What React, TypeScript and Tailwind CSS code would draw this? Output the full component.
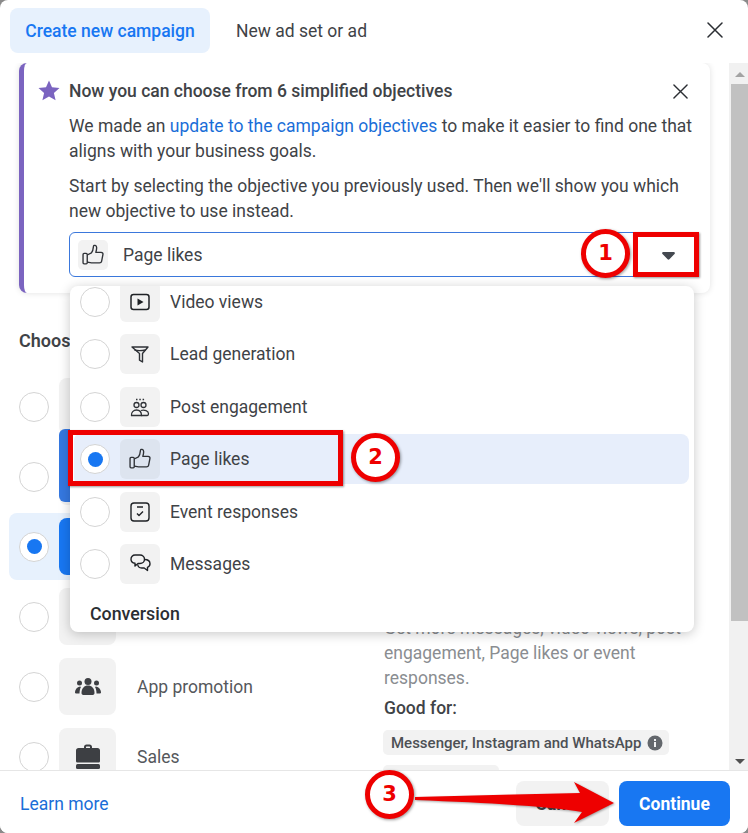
import { ReactNode } from 'react'

function Radio({ on = false }: { on?: boolean }) {
  return (
    <div className="flex h-[30px] w-[30px] shrink-0 items-center justify-center rounded-full border border-[#d4d4d4] bg-white">
      {on && <div className="h-[15px] w-[15px] rounded-full bg-[#1877f2]" />}
    </div>
  )
}

function ThumbIcon() {
  return (
    <svg width="22" height="22" viewBox="0 0 21 21" fill="none" stroke="#2f3237" strokeWidth="1.300" strokeLinejoin="round">
      <rect x="1" y="9" width="4" height="10" rx="1" />
      <path d="M5 10.500 9 8.500c1.200-1.500 1.700-3.500 2-6.500.2-1.200 3-.9 3 1.500 0 1.500-.4 3-.8 4.500h5c1.300 0 2 .9 1.800 2l-1.300 6.500c-.2 1-1 1.500-2 1.500H9c-1.500 0-2.500-.5-4-.8" />
    </svg>
  )
}

function PlayIcon() {
  return (
    <svg width="20" height="18" viewBox="0 0 20 18" fill="none">
      <rect x="1" y="1.500" width="18" height="15" rx="2.500" stroke="#1f2226" strokeWidth="1.500" />
      <path d="M7.500 5.500 13.500 9 7.500 12.500Z" fill="#1f2226" />
    </svg>
  )
}

function FunnelIcon() {
  return (
    <svg width="20" height="20" viewBox="0 0 20 20" fill="none" stroke="#2f3237" strokeWidth="1.400" strokeLinejoin="round">
      <path d="M2 3h16l-5.500 6.500V18l-3-1.800V9.500Z" />
      <path d="M4.500 6c3 .8 7 .8 11 0" />
    </svg>
  )
}

function PeopleIcon() {
  return (
    <svg width="20" height="20" viewBox="0 0 20 20" fill="none" stroke="#2f3237" strokeWidth="1.300">
      <circle cx="6.500" cy="8" r="2.500" />
      <circle cx="13.500" cy="8" r="2.500" />
      <path d="M1.500 18.500c-.5-3 2-5.500 5-5.500s5 2 5 5.500Z" />
      <path d="M11 13.500c3.500-1 7.500.4 7.500 3.200 0 1-.4 1.800-1.200 1.800h-6" />
      <path d="M6 2.500h1.500M9.300 2.500h1.500M12.600 2.500h1.500" strokeWidth="1.500" />
    </svg>
  )
}

function EventIcon() {
  return (
    <svg width="20" height="20" viewBox="0 0 20 20" fill="none" stroke="#1f2226" strokeWidth="1.400" strokeLinejoin="round">
      <rect x="1" y="1" width="18" height="18" rx="3" />
      <path d="M7 5h6" />
      <path d="m7 11.500 2 2 4-4" />
    </svg>
  )
}

function ChatIcon() {
  return (
    <svg width="21" height="20" viewBox="0 0 21 20" fill="none" stroke="#1f2226" strokeWidth="1.400" strokeLinejoin="round">
      <path d="M5 1h5c2.500 0 4.500 1.700 4.500 4.200S12.500 9.500 10 9.500H8L5 12V9.300C2.500 8.800 1 7.300 1 5.200 1 2.700 2.700 1 5 1Z" />
      <path d="M14.500 5.500c3 0 5.500 1.500 5.500 4.200 0 1.800-1 3-2.500 3.600v3.200L14.200 14h-2.500c-2 0-3.700-1-4-3.500" />
    </svg>
  )
}

function GroupIcon() {
  return (
    <svg width="26" height="18" viewBox="0 0 26 18" fill="#3d3f43">
      <circle cx="13" cy="3.500" r="3.500" />
      <circle cx="4.500" cy="5" r="2.500" />
      <circle cx="21.500" cy="5" r="2.500" />
      <path d="M6.500 15c0-5 3-7.500 6.500-7.500s6.500 2.500 6.500 7.500c0 1.500-1 2-2.500 2H9c-1.500 0-2.500-.5-2.500-2Z" />
      <path d="M5 8.500c-3 .5-4.800 3-5 5.500-.1 1 .5 1.500 1.500 1.500H4.500C4.500 13 5 10.500 6 9c-.2-.3-.6-.5-1-.5Z" />
      <path d="M21 8.500c3 .5 4.800 3 5 5.500.1 1-.5 1.500-1.500 1.500H21.500C21.500 13 21 10.500 20 9c.2-.3.600-.5 1-.5Z" />
    </svg>
  )
}

function BagIcon() {
  return (
    <svg width="24" height="26" viewBox="0 0 24 26" fill="#3d3f43">
      <path d="M8 4V3c0-1.500 1-2.500 2.500-2.500h3C15 .5 16 1.500 16 3v1h5.500C23 4 24 5 24 6.500V17c0 1-.8 1.500-1.500 1.500h-21C.8 18.500 0 18 0 17V6.500C0 5 1 4 2.500 4ZM10 4h4V3c0-.3-.2-.5-.5-.5h-3c-.3 0-.5.2-.5.5Z" />
      <rect x="0" y="20" width="24" height="5" rx="1.500" />
    </svg>
  )
}

function Close({ size }: { size: number }) {
  return (
    <svg width={size} height={size} viewBox="0 0 16 16" stroke="#2b2e33" strokeWidth="1.500" strokeLinecap="round">
      <path d="M1 1l14 14M15 1 1 15" />
    </svg>
  )
}

function InfoDot() {
  return (
    <svg width="16" height="16" viewBox="0 0 16 16">
      <circle cx="8" cy="8" r="7.500" fill="#63676c" />
      <rect x="7" y="7" width="2" height="5" fill="#f0f1f2" />
      <rect x="7" y="4" width="2" height="2" fill="#f0f1f2" />
    </svg>
  )
}

function MenuRow({ icon, label, active = false }: { icon: ReactNode; label: string; active?: boolean }) {
  return (
    <div className={`mb-[2.500px] flex h-[50px] items-center rounded-l-[6px] rounded-r-[8px] pl-[6px] ${active ? 'bg-[#e7eefb]' : ''}`}>
      <Radio on={active} />
      <div className={`ml-[10px] flex h-10 w-10 items-center justify-center rounded-[6px] ${active ? 'bg-[#dde4ef]' : 'bg-[#f2f2f2]'}`}>
        {icon}
      </div>
      <span className="ml-[10px] pt-[1px] text-[17.500px] text-[#3f4347]">{label}</span>
    </div>
  )
}

function Objective({ tile, label, selected = false }: { tile?: ReactNode; label?: string; selected?: boolean }) {
  return (
    <div className={`flex h-[67px] w-[360px] items-center rounded-[8px] pl-[10px] ${selected ? 'bg-[#e7f1fd]' : ''}`}>
      <Radio on={selected} />
      <div className={`ml-[10px] flex h-[57px] w-[57px] shrink-0 items-center justify-center rounded-[8px] ${selected ? 'bg-[#1877f2]' : 'bg-[#f2f2f2]'}`}>
        {tile}
      </div>
      {label && <span className="ml-[21px] pt-[2px] text-[17.500px] text-[#55585c]">{label}</span>}
    </div>
  )
}

function Badge({ n, className }: { n: string; className: string }) {
  return (
    <div className={`absolute flex h-[49px] w-[49px] items-center justify-center rounded-full border-[5px] border-[#ee0000] bg-white font-['DejaVu_Sans'] text-[21px] font-bold text-[#ee0000] shadow-[1px_1px_3px_rgba(0,0,0,0.4)] ${className}`}>
      {n}
    </div>
  )
}

export default function App() {
  return (
    <div className="relative h-[833px] w-[748px] overflow-hidden bg-[#8a8a8a] font-['Roboto',sans-serif]">
      <div className="flex h-full flex-col rounded-[8px] bg-white">
        <div className="flex h-[63px] shrink-0 items-start pl-[10px] pr-[25px] pt-[8px]">
          <div className="flex h-[45px] w-[200px] items-center justify-center rounded-[8px] bg-[#e7f1fd] pt-[2px] text-[17.500px] font-medium text-[#1877f2]">
            Create new campaign
          </div>
          <div className="ml-[26px] flex h-[45px] items-center pt-[2px] text-[17.500px] text-[#3f4347]">New ad set or ad</div>
          <div className="ml-auto mt-[14px]">
            <Close size={16} />
          </div>
        </div>

        <div className="flex min-h-0 flex-1">
          <div className="min-w-0 flex-1 overflow-hidden pl-[19px] pr-[19px]">
            <div className="h-[230px] rounded-[8px] border-l-[5px] border-[#7b64c0] bg-white pl-[45px] pr-[14px] pt-[16px] shadow-[0_0_6px_rgba(0,0,0,0.12)]">
              <div className="relative">
                <svg className="absolute left-[-31px] top-[1px]" width="22" height="21" viewBox="0 0 22 21" fill="#7b64c0">
                  <path d="M11 .5l3 6.800 7.500.7-5.600 5 1.700 7.300L11 16.500l-6.600 3.800L6.100 13 .5 8l7.500-.7Z" />
                </svg>
                <div className="flex items-center justify-between pr-[8px]">
                  <span className="text-[17.500px] font-medium leading-[25px] text-[#3f4347]">
                    Now you can choose from 6 simplified objectives
                  </span>
                  <Close size={15} />
                </div>
                <p className="mt-[10px] text-[17.500px] leading-[25px] text-[#3f4347]">
                  We made an <span className="text-[#1a6ed8]">update to the campaign objectives</span> to make it easier to find one that aligns with your business goals.
                </p>
                <p className="mt-[10px] text-[17.500px] leading-[25px] text-[#3f4347]">
                  Start by selecting the objective you previously used. Then we'll show you which new objective to use instead.
                </p>
                <div className="mt-[8px] flex h-[45px] items-center rounded-[6px] border border-[#3b78dc] pl-[8px]">
                  <div className="flex h-[30px] w-[30px] items-center justify-center rounded-[5px] bg-[#f2f2f2]">
                    <ThumbIcon />
                  </div>
                  <span className="ml-[15px] pt-[2px] text-[17.500px] text-[#3f4347]">Page likes</span>
                </div>
              </div>
            </div>

            <div className="mt-[35px] whitespace-nowrap text-[18px] font-semibold leading-[25px] text-[#3f4347]">Choose a campaign objective</div>

            <div className="relative">
              <div className="ml-[-10px] mt-[20px] flex w-[340px] flex-col gap-[3px]">
                <Objective />
                <Objective />
                <Objective selected />
                <Objective />
                <Objective tile={<GroupIcon />} label="App promotion" />
                <Objective tile={<BagIcon />} label="Sales" />
              </div>
              <div className="absolute left-[365px] top-[243px] w-[320px]">
                <p className="text-[17.500px] leading-[25px] text-[#8a8d91]">
                  Get more messages, video views, post engagement, Page likes or event responses.
                </p>
                <div className="mt-[5px] text-[17.500px] font-medium leading-[25px] text-[#3f4347]">Good for:</div>
                <div className="ml-[-1px] mt-[9px] flex h-[25px] w-[286px] items-center gap-[6px] rounded-[5px] bg-[#f2f2f2] pl-[8px] pt-[1px] text-[15px] font-medium text-[#4d5055]">
                  Messenger, Instagram and WhatsApp <InfoDot />
                </div>
                <div className="ml-[-1px] mt-[10px] flex h-[25px] w-[116px] items-center justify-end rounded-[5px] bg-[#f2f2f2] pr-[7px]">
                  <InfoDot />
                </div>
              </div>
            </div>
          </div>

          <div className="flex w-[19px] shrink-0 flex-col bg-[#f1f1f1] pl-[2px]">
            <div className="flex h-[21px] items-center justify-center pt-[1px]">
              <div className="h-0 w-0 border-x-[5px] border-b-[5px] border-x-transparent border-b-[#a3a3a3]" />
            </div>
            <div className="h-[537px] w-full bg-[#c1c1c1]" />
            <div className="flex flex-1 items-end justify-center pb-[6px]">
              <div className="h-0 w-0 border-x-[5px] border-t-[5px] border-x-transparent border-t-[#505050]" />
            </div>
          </div>
        </div>

        <div className="flex h-[63px] shrink-0 items-start rounded-b-[8px] border-t border-[#e6e6e6] bg-white pl-[20px] pr-[18px] pt-[10px]">
          <span className="flex h-[45px] items-center pt-[2px] text-[17.500px] text-[#1a6ed8]">Learn more</span>
          <div className="ml-auto flex h-[45px] w-[93px] items-center justify-center rounded-[8px] bg-[#f2f2f2] pt-[2px] text-[17.500px] font-bold text-[#3f4347]">
            Cancel
          </div>
          <div className="ml-[10px] flex h-[45px] w-[111px] items-center justify-center rounded-[8px] bg-[#1877f2] pt-[2px] text-[17.500px] font-bold text-white">
            Continue
          </div>
        </div>
      </div>

      {/* row 2 tile, hovered, peeks out from behind the menu */}
      <div className="absolute left-[59px] top-[429px] h-[73px] w-[20px] rounded-l-[6px] bg-[#3578e0]" />

      <div className="absolute left-[70px] top-[286px] h-[346px] w-[624px] overflow-hidden rounded-[8px] bg-white shadow-[0_2px_12px_rgba(0,0,0,0.22)]">
        <div className="mt-[-9.500px] pl-[4px] pr-[5px]">
          <MenuRow icon={<PlayIcon />} label="Video views" />
          <MenuRow icon={<FunnelIcon />} label="Lead generation" />
          <MenuRow icon={<PeopleIcon />} label="Post engagement" />
          <MenuRow icon={<ThumbIcon />} label="Page likes" active />
          <MenuRow icon={<EventIcon />} label="Event responses" />
          <MenuRow icon={<ChatIcon />} label="Messages" />
          <div className="pl-[16px] pt-[9px] text-[17.800px] font-medium text-[#2b2e33]">Conversion</div>
        </div>
      </div>

      {/* annotations pasted on top of the screenshot */}
      <div className="absolute left-[633px] top-[232px] flex h-[45px] w-[66px] items-center justify-center border-[5px] border-[#ee0000] bg-white pl-[4px] pt-[2px] shadow-[1px_1px_2px_rgba(0,0,0,0.4)]">
        <svg width="13" height="8" viewBox="0 0 13 8" fill="#444950">
          <path d="M1.500 0h10c1.200 0 1.800 1.200 1 2L7.400 7.300c-.5.500-1.300.500-1.800 0L.5 2c-.8-.8-.2-2 1-2Z" />
        </svg>
      </div>
      <div className="absolute left-[68px] top-[430px] h-[56px] w-[275px] border-[5px] border-[#ee0000] shadow-[1px_1px_2px_rgba(0,0,0,0.4)]" />
      <Badge n="1" className="left-[581px] top-[229px]" />
      <Badge n="2" className="left-[351px] top-[433px]" />
      <Badge n="3" className="left-[365px] top-[770px]" />
      <svg className="absolute left-[414px] top-[780px] drop-shadow-[1px_1px_1px_rgba(0,0,0,0.35)]" width="202" height="46" viewBox="0 0 202 46">
        <path d="M1 17 L166 13 L160 2 L200 23 L160 43 L168 32 Q130 25 1 20 Z" fill="#ee0000" />
      </svg>
    </div>
  )
}
